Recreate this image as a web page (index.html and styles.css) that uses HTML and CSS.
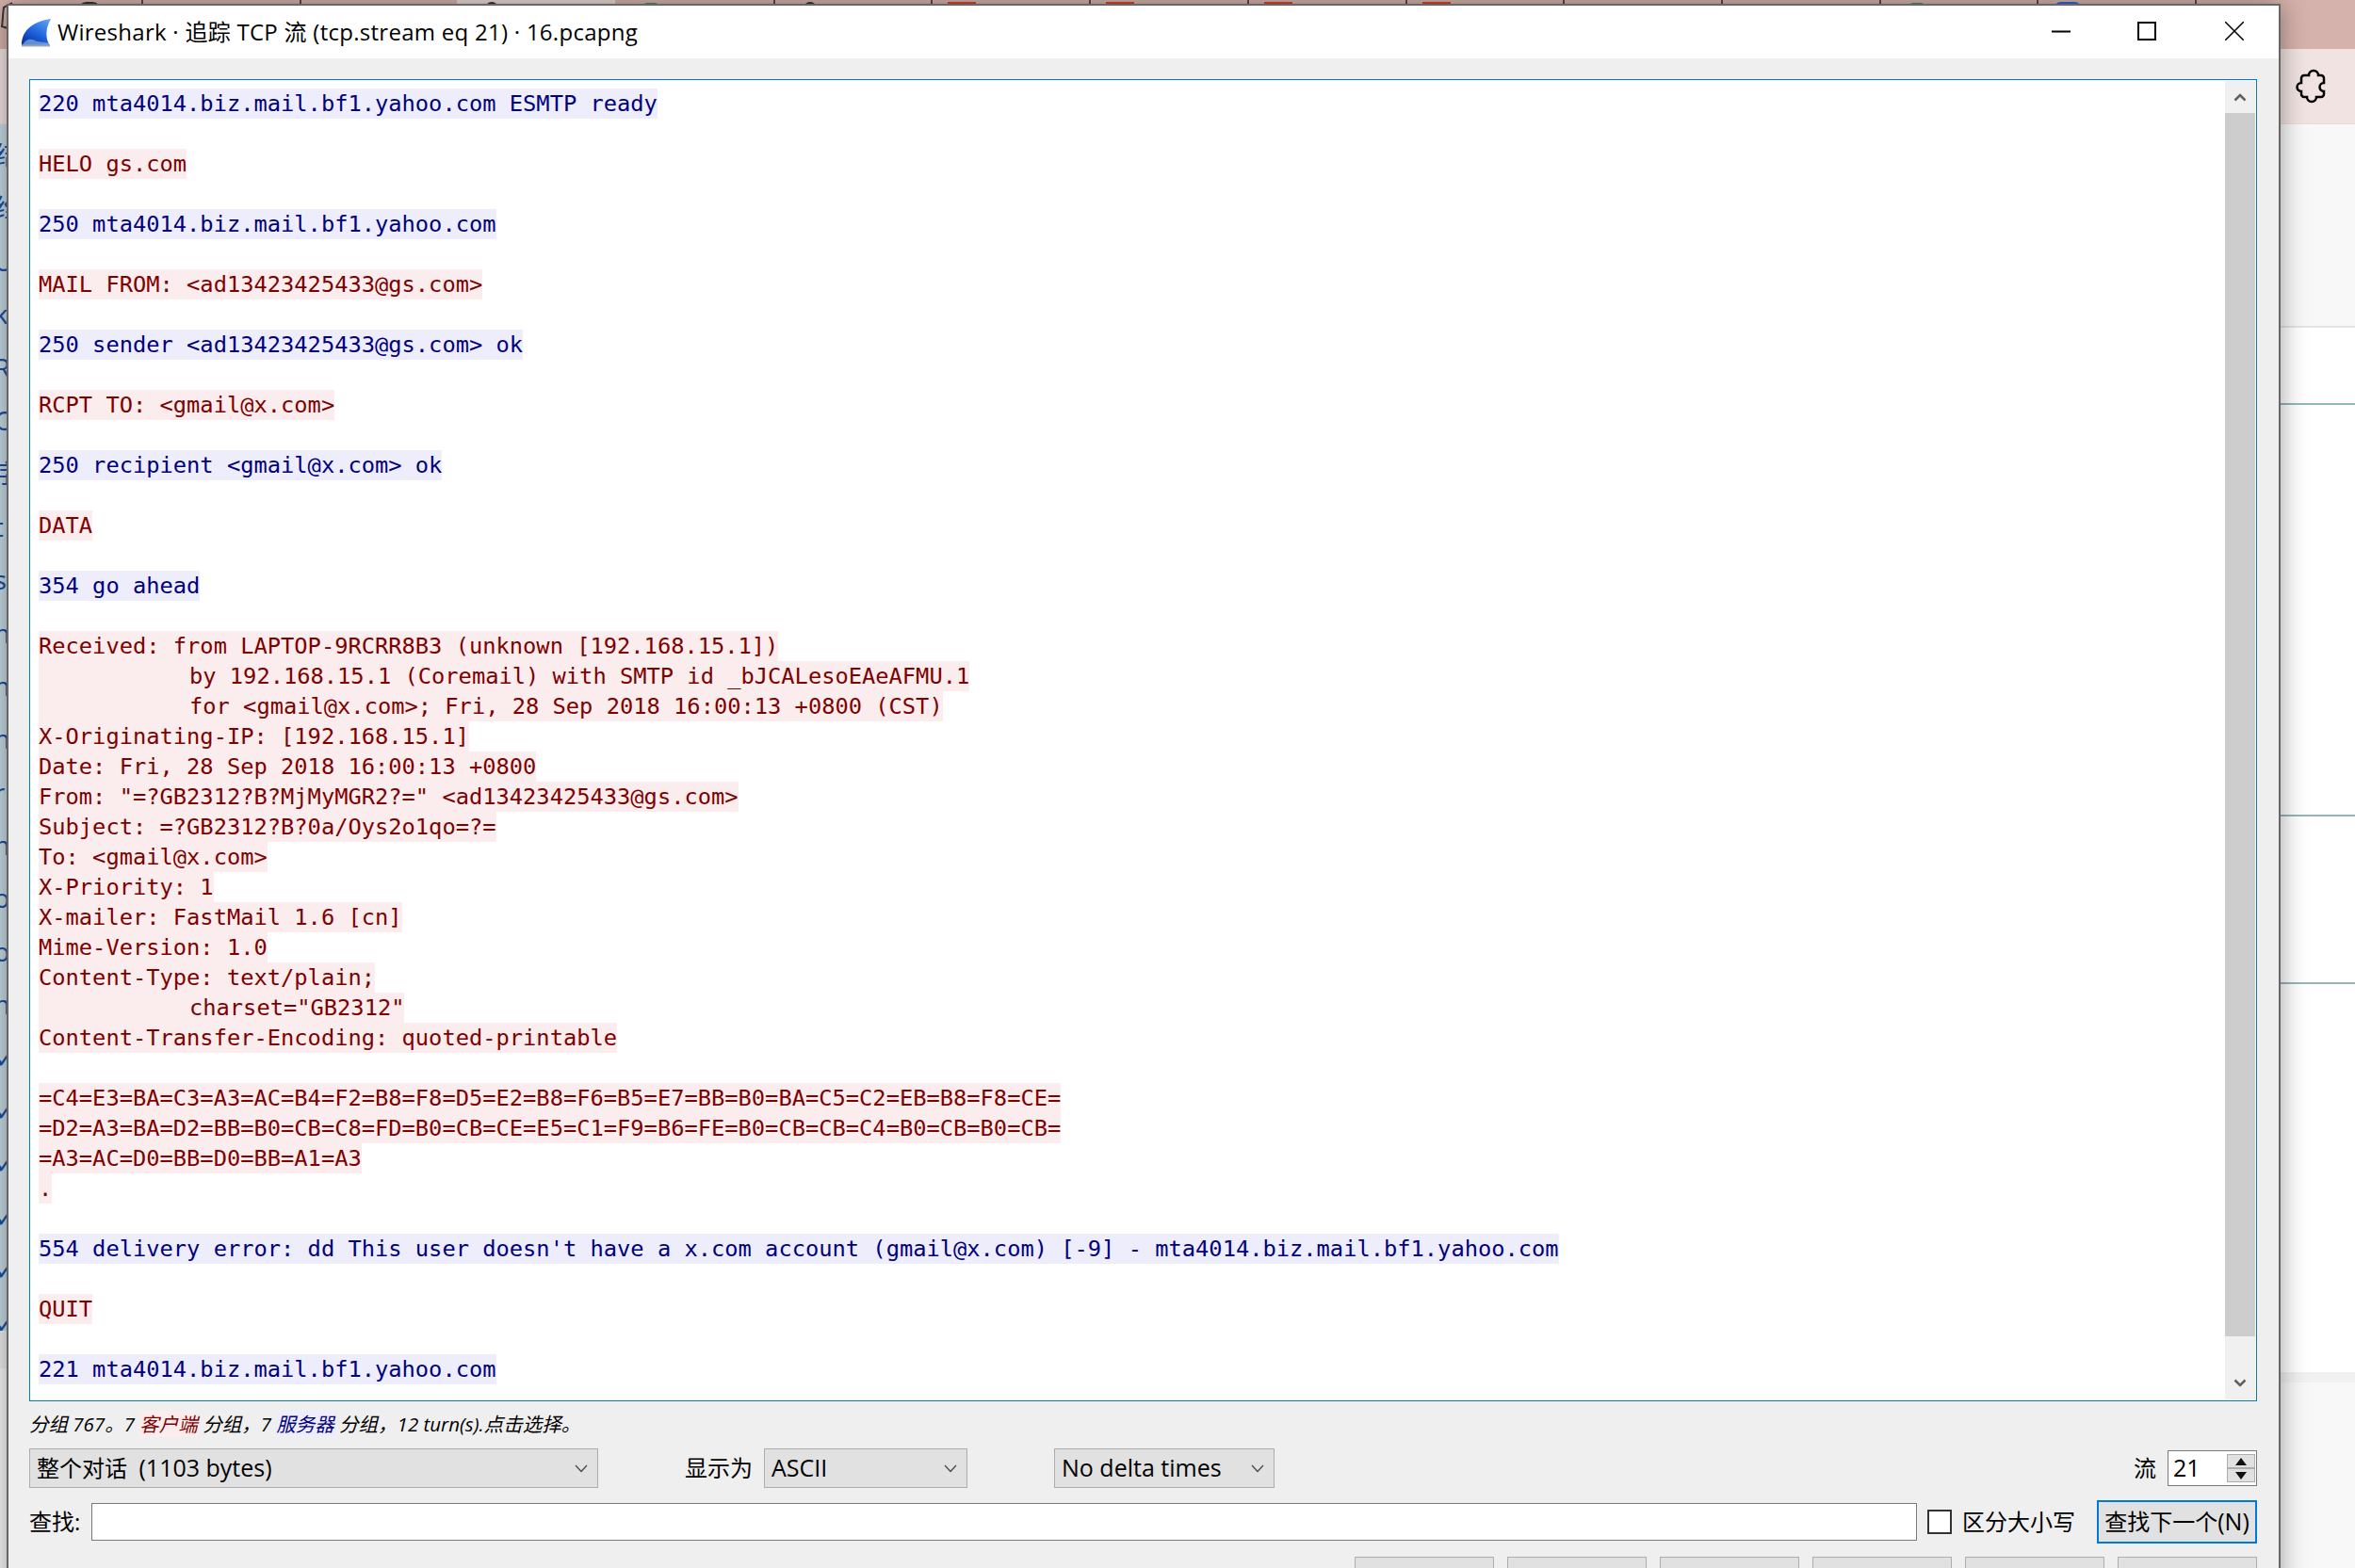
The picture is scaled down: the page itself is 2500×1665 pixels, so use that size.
FILE: index.html
```html
<!DOCTYPE html>
<html lang="zh-CN">
<head>
<meta charset="utf-8">
<title>Wireshark · 追踪 TCP 流 (tcp.stream eq 21) · 16.pcapng</title>
<link rel="stylesheet" href="styles.css">
</head>
<body>
<div class="desktop">
  <div class="tabs">
    <svg class="tab-curve" width="16" height="34" viewBox="0 0 16 34"><path d="M13 3 L4 8 C3 14 3 22 2 28 L8 30" fill="none" stroke="#3a3a3a" stroke-width="2"/></svg>
    <div class="tab tab-first"><i class="fav fav-dark"></i></div>
    <div class="tab"></div>
    <div class="tab"></div>
    <div class="tab tab-pale"><i class="fav fav-dark fav-small"></i></div>
    <div class="tab tab-plain"><i class="fav fav-green"></i></div>
    <div class="tab tab-inset"><i class="fav fav-dark fav-small"></i></div>
    <div class="tab"><i class="fav fav-orange"></i></div>
    <div class="tab"><i class="fav fav-orange"></i></div>
    <div class="tab"><i class="fav fav-orange"></i></div>
    <div class="tab"><i class="fav fav-orange"></i></div>
    <div class="tab"></div>
    <div class="tab"></div>
    <div class="tab tab-inset"><i class="fav fav-green"></i></div>
    <div class="tab"><i class="fav fav-blue"></i></div>
    <div class="tab"></div>
  </div>
  <div class="toolbar">
    <svg class="puzzle" width="38" height="38" viewBox="0 0 38 38"><path d="M7 11a3 3 0 0 1 3-3h5a5 5 0 0 1 10 0h3a3 3 0 0 1 3 3v5a4.5 4.5 0 0 0 0 9v3a3 3 0 0 1-3 3h-5a5 5 0 0 1-10 0h-3a3 3 0 0 1-3-3v-3a4.5 4.5 0 0 1 0-9z" fill="none" stroke="#000" stroke-width="2.500"/></svg>
  </div>
  <div class="page">
    <div class="leftpane">
      <div class="lp-list">
        <div class="lp-row">结</div><div class="lp-row">绉</div><div class="lp-row">U</div><div class="lp-row">k</div>
        <div class="lp-row">R</div><div class="lp-row">C</div><div class="lp-row">字</div><div class="lp-row">t</div>
        <div class="lp-row">s</div><div class="lp-row">n</div><div class="lp-row">n</div><div class="lp-row">n</div>
        <div class="lp-row">r</div><div class="lp-row">n</div><div class="lp-row">o</div><div class="lp-row">o</div>
        <div class="lp-row">n</div><div class="lp-row">✓</div><div class="lp-row">✓</div><div class="lp-row">✓</div>
        <div class="lp-row">✓</div><div class="lp-row">✓</div><div class="lp-row">✓</div>
      </div>
      <div class="lp-foot"></div>
      <div class="lp-end"></div>
    </div>
    <div class="rightpane">
      <div class="r-head"></div>
      <div class="r-row r-a"></div>
      <div class="r-row r-b"></div>
      <div class="r-row r-c"></div>
      <div class="r-fill"></div>
      <div class="r-band"></div>
      <div class="r-end"></div>
    </div>
  </div>

  <section class="win">
    <header class="titlebar">
      <svg class="fin" width="33" height="31" viewBox="0 0 33 31">
        <defs>
          <linearGradient id="fing" x1="0.85" y1="0" x2="0.25" y2="1">
            <stop offset="0" stop-color="#5da2f0"/><stop offset="0.55" stop-color="#1d62dc"/><stop offset="1" stop-color="#0c2f9c"/>
          </linearGradient>
        </defs>
        <path d="M1 29.500C0.500 15 11 4 32 1 26 12 26 22 31 29.500Z" fill="url(#fing)"/>
        <path d="M1.500 29.500C4 23 10 21 15 24c5 2.500 10 1 15 3l1 2.500Z" fill="#7fb2e8" opacity=".7"/>
        <path d="M1 28.500h30v2H1z" fill="#9aa7b5"/>
      </svg>
      <span class="title">Wireshark · 追踪 TCP 流 (tcp.stream eq 21) · 16.pcapng</span>
      <div class="caption">
        <svg width="20" height="20" viewBox="0 0 20 20"><path d="M0 10.500h20" stroke="#000" stroke-width="2"/></svg>
        <svg width="20" height="20" viewBox="0 0 20 20"><path d="M1 1h18v18H1z" fill="none" stroke="#000" stroke-width="2"/></svg>
        <svg width="20" height="20" viewBox="0 0 20 20"><path d="M0 0l20 20M20 0L0 20" stroke="#000" stroke-width="1.500"/></svg>
      </div>
    </header>
    <div class="body">
      <div class="streambox">
        <div class="stream">
          <div class="line"><span class="s">220 mta4014.biz.mail.bf1.yahoo.com ESMTP ready</span></div>
          <div class="line"></div>
          <div class="line"><span class="c">HELO gs.com</span></div>
          <div class="line"></div>
          <div class="line"><span class="s">250 mta4014.biz.mail.bf1.yahoo.com</span></div>
          <div class="line"></div>
          <div class="line"><span class="c">MAIL FROM: &lt;ad13423425433@gs.com&gt;</span></div>
          <div class="line"></div>
          <div class="line"><span class="s">250 sender &lt;ad13423425433@gs.com&gt; ok</span></div>
          <div class="line"></div>
          <div class="line"><span class="c">RCPT TO: &lt;gmail@x.com&gt;</span></div>
          <div class="line"></div>
          <div class="line"><span class="s">250 recipient &lt;gmail@x.com&gt; ok</span></div>
          <div class="line"></div>
          <div class="line"><span class="c">DATA</span></div>
          <div class="line"></div>
          <div class="line"><span class="s">354 go ahead</span></div>
          <div class="line"></div>
          <div class="line"><span class="c">Received: from LAPTOP-9RCRR8B3 (unknown [192.168.15.1])</span></div>
          <div class="line"><span class="c">&#9;by 192.168.15.1 (Coremail) with SMTP id _bJCALesoEAeAFMU.1</span></div>
          <div class="line"><span class="c">&#9;for &lt;gmail@x.com&gt;; Fri, 28 Sep 2018 16:00:13 +0800 (CST)</span></div>
          <div class="line"><span class="c">X-Originating-IP: [192.168.15.1]</span></div>
          <div class="line"><span class="c">Date: Fri, 28 Sep 2018 16:00:13 +0800</span></div>
          <div class="line"><span class="c">From: "=?GB2312?B?MjMyMGR2?=" &lt;ad13423425433@gs.com&gt;</span></div>
          <div class="line"><span class="c">Subject: =?GB2312?B?0a/Oys2o1qo=?=</span></div>
          <div class="line"><span class="c">To: &lt;gmail@x.com&gt;</span></div>
          <div class="line"><span class="c">X-Priority: 1</span></div>
          <div class="line"><span class="c">X-mailer: FastMail 1.6 [cn]</span></div>
          <div class="line"><span class="c">Mime-Version: 1.0</span></div>
          <div class="line"><span class="c">Content-Type: text/plain;</span></div>
          <div class="line"><span class="c">&#9;charset="GB2312"</span></div>
          <div class="line"><span class="c">Content-Transfer-Encoding: quoted-printable</span></div>
          <div class="line"></div>
          <div class="line"><span class="c">=C4=E3=BA=C3=A3=AC=B4=F2=B8=F8=D5=E2=B8=F6=B5=E7=BB=B0=BA=C5=C2=EB=B8=F8=CE=</span></div>
          <div class="line"><span class="c">=D2=A3=BA=D2=BB=B0=CB=C8=FD=B0=CB=CE=E5=C1=F9=B6=FE=B0=CB=CB=C4=B0=CB=B0=CB=</span></div>
          <div class="line"><span class="c">=A3=AC=D0=BB=D0=BB=A1=A3</span></div>
          <div class="line"><span class="c">.</span></div>
          <div class="line"></div>
          <div class="line"><span class="s">554 delivery error: dd This user doesn't have a x.com account (gmail@x.com) [-9] - mta4014.biz.mail.bf1.yahoo.com</span></div>
          <div class="line"></div>
          <div class="line"><span class="c">QUIT</span></div>
          <div class="line"></div>
          <div class="line"><span class="s">221 mta4014.biz.mail.bf1.yahoo.com</span></div>
        </div>
        <div class="vbar">
          <div class="vbtn">
            <svg width="14" height="10" viewBox="0 0 14 10"><path d="M1.500 8.500L7 3l5.500 5.500" fill="none" stroke="#606060" stroke-width="2.500"/></svg>
          </div>
          <div class="vthumb"></div>
          <div class="vtrack"></div>
          <div class="vbtn">
            <svg width="14" height="10" viewBox="0 0 14 10"><path d="M1.500 1.500L7 7l5.500-5.500" fill="none" stroke="#606060" stroke-width="2.500"/></svg>
          </div>
        </div>
      </div>

      <p class="status">分组 767。7 <span class="st-c">客户端</span> 分组，7 <span class="st-s">服务器</span> 分组，12 turn(s).点击选择。</p>

      <div class="row row-combo">
        <div class="combo combo-a"><span>整个对话  <span class="lat">(1103 bytes)</span></span>
          <svg width="14" height="9" viewBox="0 0 14 9"><path d="M1 1l6 6.500L13 1" fill="none" stroke="#444" stroke-width="1.200"/></svg></div>
        <span class="lbl lbl-show">显示为</span>
        <div class="combo combo-b"><span class="lat">ASCII</span>
          <svg width="14" height="9" viewBox="0 0 14 9"><path d="M1 1l6 6.500L13 1" fill="none" stroke="#444" stroke-width="1.200"/></svg></div>
        <div class="combo combo-c"><span class="lat">No delta times</span>
          <svg width="14" height="9" viewBox="0 0 14 9"><path d="M1 1l6 6.500L13 1" fill="none" stroke="#444" stroke-width="1.200"/></svg></div>
        <span class="lbl lbl-stream">流</span>
        <div class="spin">
          <span class="lat spin-val">21</span>
          <div class="spin-btns">
            <div class="spin-btn"><svg width="12" height="8" viewBox="0 0 12 8"><path d="M6 0l6 8H0z" fill="#111"/></svg></div>
            <div class="spin-btn"><svg width="12" height="8" viewBox="0 0 12 8"><path d="M0 0h12L6 8z" fill="#111"/></svg></div>
          </div>
        </div>
      </div>

      <div class="row row-find">
        <span class="lbl">查找:</span>
        <div class="findinput"></div>
        <div class="check"></div>
        <span class="lbl lbl-case">区分大小写</span>
        <div class="btn btn-next">查找下一个<span class="lat">(N)</span></div>
      </div>

      <div class="row row-btns">
        <div class="btn"></div><div class="btn"></div><div class="btn"></div>
        <div class="btn"></div><div class="btn"></div><div class="btn"></div>
      </div>
    </div>
  </section>
</div>
</body>
</html>
```

FILE: styles.css
```css
* { box-sizing: border-box; }
html, body { margin: 0; padding: 0; height: 100%; overflow: hidden; background: #fff; }
.desktop {
  position: relative;
  width: 2500px;
  height: 1665px;
  overflow: hidden;
  display: flex;
  flex-direction: column;
  font-family: "Open Sans", "Noto Sans CJK SC", sans-serif;
  font-size: 24px;
  color: #000;
}

/* browser behind the window */
.tabs { position: relative; flex: 0 0 52px; display: flex; background: #d5b2ab; }
.tab-curve { position: absolute; left: 0; top: 0; }
.tab { flex: 0 0 167.7px; height: 52px; padding-left: 16px; border-left: 2px solid #5c4a48; }
.tab-first { flex-basis: 150px; border-left: 0; padding-left: 82px; }
.tab-pale { background: #e8d8d4; border-left: 0; padding-left: 30px; }
.tab-plain { border-left: 0; padding-left: 30px; }
.tab-inset { padding-left: 30px; }
.fav { display: block; width: 30px; height: 20px; margin-top: 2px; }
.fav-dark { background: #333; width: 26px; border-radius: 12px 12px 0 0; height: 10px; }
.fav-small { width: 14px; }
.fav-green { background: #3f8f6a; width: 16px; height: 8px; border-radius: 8px; margin-top: 3px; }
.fav-orange { background: #d9432a; }
.fav-blue { background: #2a66d8; border-radius: 8px 8px 0 0; }

.toolbar { flex: 0 0 80px; display: flex; justify-content: flex-end; padding: 20px 26px 0 0; background: #f0e3e1; border-bottom: 1px solid #e8dcda; }
.puzzle { display: block; }

.page { flex: 1; display: flex; justify-content: space-between; }
.leftpane { width: 9px; display: flex; flex-direction: column; }
.lp-list { flex: 0 0 1281px; padding-top: 5px; background: #c5d9e3; overflow: hidden; }
.lp-row {
  height: 56.4px;
  line-height: 56px;
  width: 9px;
  overflow: hidden;
  white-space: nowrap;
  text-indent: -6px;
  font-size: 27px;
  color: #1b4f9f;
  font-family: "Noto Sans", "DejaVu Sans", "Noto Sans CJK SC", sans-serif;
}
.lp-foot { flex: 0 0 40px; background: #ececec; }
.lp-end { flex: 1; background: #f6f6f6; }

.rightpane { width: 81px; display: flex; flex-direction: column; background: #fff; }
.r-head { flex: 0 0 216px; background: #f8f8f8; border-bottom: 2px solid #e4e4e4; }
.r-row { border-bottom: 2px solid #94b6bd; }
.r-a { flex: 0 0 82px; }
.r-b { flex: 0 0 437px; }
.r-c { flex: 0 0 178px; }
.r-fill { flex: 0 0 412px; }
.r-band { flex: 0 0 11px; background: #f1f1f1; }
.r-end { flex: 1; background: #f8f8f8; }

/* Wireshark window */
.win {
  position: absolute;
  left: 7px;
  top: 4px;
  width: 2414px;
  height: 1700px;
  border: 2px solid #6b6666;
  background: #efefef;
  box-shadow: 0 0 26px rgba(0, 0, 0, .38);
}
.titlebar { height: 56px; background: #fff; display: flex; align-items: center; padding-left: 13px; }
.fin { display: block; flex: none; }
.title { margin-left: 6px; padding-bottom: 4px; white-space: nowrap; font-size: 24px; letter-spacing: .27px; }
.caption { margin-left: auto; display: flex; gap: 71px; padding: 0 37px 2px 0; align-items: center; }
.caption svg { display: block; }
.caption svg:last-child { margin-left: 2px; }

.body { padding: 22px 23px 0 22px; }
.streambox { height: 1404px; display: flex; border: 1px solid #0078d7; background: #fff; }
.stream {
  flex: 1;
  min-width: 0;
  padding: 9px;
  overflow: hidden;
  font-family: "DejaVu Sans Mono", "Liberation Mono", monospace;
  font-size: 23.73px;
  tab-size: 160px;
}
.line { height: 32px; line-height: 32px; white-space: pre; }
.line span { display: inline-block; height: 32px; vertical-align: top; }
.s { color: #00007f; background: #ededfb; }
.c { color: #7f0000; background: #fbeded; }

.vbar { flex: 0 0 32px; margin: 1px 1px 1px 0; display: flex; flex-direction: column; background: #f0f0f0; }
.vbtn { flex: 0 0 34px; display: flex; align-items: center; justify-content: center; }
.vthumb { flex: 0 0 1299px; background: #cdcdcd; }
.vtrack { flex: 1; }

.status { margin: 11px 0 0; height: 26px; line-height: 26px; font-size: 20.5px; font-style: italic; white-space: pre; }
.st-c { color: #7f0000; background: #fbeded; }
.st-s { color: #00007f; background: #ededfb; }

.row { display: flex; align-items: center; }
.row-combo { margin-top: 13px; height: 42px; }
.combo {
  height: 42px;
  display: flex;
  align-items: center;
  justify-content: space-between;
  padding: 0 10px 3px 7px;
  background: #e1e1e1;
  border: 1px solid #adadad;
  white-space: pre;
}
.combo svg { margin-top: 3px; }
.combo-a { width: 604px; }
.combo-b { width: 216px; margin-left: 12px; }
.combo-c { width: 234px; margin-left: 92px; }
.lbl { white-space: nowrap; padding-bottom: 3px; }
.lbl-show { margin-left: 92px; }
.lbl-stream { margin-left: auto; margin-right: 12px; }
.lat { font-size: 25px; }

.spin { width: 95px; height: 38px; display: flex; align-items: center; justify-content: space-between; padding: 0 1px 0 5px; background: #fff; border: 1px solid #7a7a7a; }
.spin-val { padding-bottom: 3px; }
.spin-btns { width: 30px; display: flex; flex-direction: column; }
.spin-btn { height: 15px; display: flex; align-items: center; justify-content: center; background: #e1e1e1; border: 1px solid #adadad; }
.spin-btn svg { display: block; }

.row-find { margin-top: 13px; height: 46px; }
.findinput { flex: 1; height: 40px; margin-left: 12px; background: #fff; border: 1px solid #7a7a7a; }
.check { flex: none; width: 26px; height: 26px; margin-left: 11px; background: #fff; border: 2px solid #333; }
.lbl-case { margin-left: 11px; }
.btn { flex: none; width: 148px; height: 46px; background: #e1e1e1; border: 1px solid #adadad; }
.btn-next { width: 170px; margin-left: 23px; padding-bottom: 3px; border: 2px solid #0078d7; display: flex; align-items: center; justify-content: center; white-space: nowrap; }

.row-btns { margin-top: 14px; justify-content: flex-end; gap: 14px; }
```
